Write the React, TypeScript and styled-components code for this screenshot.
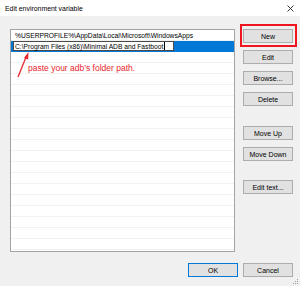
import React from 'react';
import styled, { createGlobalStyle } from 'styled-components';

const GlobalStyle = createGlobalStyle`
    html, body {
        margin: 0;
        padding: 0;
        background: #f0f0f0;
    }
    body {
        font-family: "Liberation Sans", Arial, sans-serif;
    }
`;

const Window = styled.div`
    position: relative;
    width: 300px;
    height: 286px;
    background: #f0f0f0;
    display: flex;
    flex-direction: column;
    overflow: hidden;
    color: #000;
`;

const TitleBar = styled.div`
    height: 16px;
    background: #ffffff;
    display: flex;
    align-items: center;
    justify-content: space-between;
    padding: 0 5px 0 5px;
    font-size: 6.9px;
`;

const CloseIcon = styled.svg`
    width: 7px;
    height: 7px;
    margin-right: 1px;
`;

const Body = styled.div`
    display: flex;
    gap: 8px;
    padding: 13px 7px 0 10px;
`;

const ListBox = styled.div`
    position: relative;
    width: 223px;
    height: 221px;
    border: 1px solid #a3a3a3;
    background: #ffffff;
    overflow: hidden;
`;

const Row = styled.div<{ $selected?: boolean }>`
    height: 10px;
    border-bottom: 1px solid ${p => (p.$selected ? '#0078d7' : '#f2f2f2')};
    background: ${p => (p.$selected ? '#0078d7' : 'transparent')};
    display: flex;
    align-items: center;
    padding-left: 4px;
    font-size: 6.7px;
    white-space: nowrap;
`;

const EditBox = styled.div`
    box-sizing: border-box;
    width: 161px;
    height: 10px;
    margin-left: -2px;
    background: #ffffff;
    border: 1px solid #4a4a4a;
    display: flex;
    align-items: center;
    padding-left: 1px;
`;

const Caret = styled.span`
    display: inline-block;
    width: 1px;
    height: 8px;
    background: #000;
    margin-left: 1px;
`;

const Annotation = styled.div`
    position: absolute;
    left: 17px;
    top: 33px;
    font-size: 8.5px;
    color: #e8262d;
    white-space: nowrap;
`;

const Arrow = styled.svg`
    position: absolute;
    left: 4px;
    top: 20px;
    width: 16px;
    height: 30px;
`;

const ButtonColumn = styled.div`
    display: flex;
    flex-direction: column;
    width: 50px;
`;

const Button = styled.div<{ $space?: number; $default?: boolean }>`
    box-sizing: border-box;
    width: 50px;
    height: 14px;
    margin-top: ${p => p.$space ?? 0}px;
    background: #e1e1e1;
    border: 1px solid ${p => (p.$default ? '#0078d7' : '#adadad')};
    display: flex;
    align-items: center;
    justify-content: center;
    font-size: 7px;
    white-space: nowrap;
`;

const Highlight = styled.div`
    position: relative;
`;

const RedFrame = styled.div`
    position: absolute;
    left: -3px;
    top: -5px;
    right: -4px;
    bottom: -4px;
    border: 2px solid #f0141e;
`;

const Footer = styled.div`
    display: flex;
    justify-content: flex-end;
    gap: 5px;
    padding: 11px 7px 0 0;
`;

const Grip = styled.svg`
    position: absolute;
    right: 1px;
    bottom: 1px;
    width: 7px;
    height: 7px;
`;

const rows = 20;

export default function App() {
    return (
        <Window>
            <GlobalStyle />
            <TitleBar>
                <span>Edit environment variable</span>
                <CloseIcon viewBox="0 0 7 7">
                    <path d="M0.5 0.5 L6.5 6.5 M6.5 0.5 L0.5 6.5" stroke="#222" strokeWidth="0.9" />
                </CloseIcon>
            </TitleBar>
            <Body>
                <ListBox>
                    <Row>%USERPROFILE%\AppData\Local\Microsoft\WindowsApps</Row>
                    <Row $selected>
                        <EditBox>
                            C:\Program Files (x86)\Minimal ADB and Fastboot
                            <Caret />
                        </EditBox>
                    </Row>
                    {Array.from({ length: rows }).map((_, i) => (
                        <Row key={i} />
                    ))}
                    <Annotation>paste your adb’s folder path.</Annotation>
                    <Arrow viewBox="0 0 16 30">
                        <path d="M3 27 L11.5 6" stroke="#e8262d" strokeWidth="1.3" />
                        <path d="M13.5 2 L9 8 L13.2 9.6 Z" fill="#e8262d" />
                    </Arrow>
                </ListBox>
                <ButtonColumn>
                    <Highlight>
                        <Button>New</Button>
                        <RedFrame />
                    </Highlight>
                    <Button $space={7}>Edit</Button>
                    <Button $space={7}>Browse...</Button>
                    <Button $space={7}>Delete</Button>
                    <Button $space={20}>Move Up</Button>
                    <Button $space={7}>Move Down</Button>
                    <Button $space={19}>Edit text...</Button>
                </ButtonColumn>
            </Body>
            <Footer>
                <Button $default>OK</Button>
                <Button>Cancel</Button>
            </Footer>
            <Grip viewBox="0 0 7 7">
                <rect x="5" y="1" width="1" height="1" fill="#a0a0a0" />
                <rect x="3" y="3" width="1" height="1" fill="#a0a0a0" />
                <rect x="5" y="3" width="1" height="1" fill="#a0a0a0" />
                <rect x="1" y="5" width="1" height="1" fill="#a0a0a0" />
                <rect x="3" y="5" width="1" height="1" fill="#a0a0a0" />
                <rect x="5" y="5" width="1" height="1" fill="#a0a0a0" />
            </Grip>
        </Window>
    );
}
